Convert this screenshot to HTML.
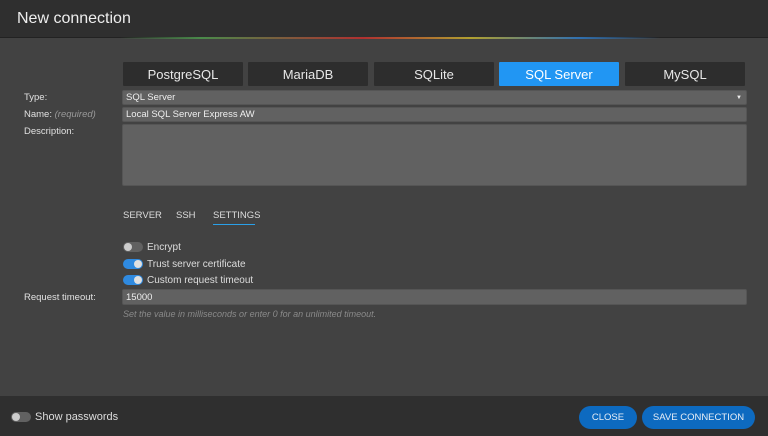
<!DOCTYPE html>
<html><head><style>
*{box-sizing:border-box;margin:0;padding:0}
body{width:768px;height:436px;background:#424242;font-family:"Liberation Sans",sans-serif;color:#ddd;position:relative;overflow:hidden;font-size:10px}
.a{position:absolute}
.hdr{left:0;top:0;width:768px;height:38px;background:#2f2f2f;border-bottom:1px solid #222}
.hdr span{position:absolute;left:17px;top:10px;font-size:16px;color:#eee}
.grad{left:120px;top:37px;width:540px;height:2px;background:linear-gradient(90deg,rgba(0,0,0,0),#4a8a4a 15%,#b03030 45%,#b0a030 65%,#3070b0 85%,rgba(0,0,0,0))}
.tab{top:62px;height:24px;width:120px;background:#2d2d2d;color:#e8e8e8;font-size:13px;text-align:center;line-height:25px;border-radius:1px}
.inp{left:122px;width:625px;background:#616161;border:1px solid #555;color:#eee;font-size:9.5px;padding-left:3px;border-radius:2px}
.lbl{left:24px;font-size:9.5px;color:#e0e0e0}
.tg{width:20px;height:10px;border-radius:5px;background:#616161}
.tg i{position:absolute;top:1px;left:1px;width:8px;height:8px;border-radius:50%;background:#ccc}
.tg.on{background:#2f8ae0}.tg.on i{left:11px;background:#e0e0e0}
.foot{left:0;top:396px;width:768px;height:40px;background:#2f2f2f}
.btn{top:406px;height:23px;border-radius:12px;background:#0d6ac0;color:#e8eef6;font-size:9.5px;text-align:center;line-height:23px}
</style></head><body>
<div class="a hdr"><span>New connection</span></div>
<div class="a grad"></div>
<div class="a tab" style="left:123px">PostgreSQL</div>
<div class="a tab" style="left:248px">MariaDB</div>
<div class="a tab" style="left:374px">SQLite</div>
<div class="a tab" style="left:499px;background:#2196f3;color:#fff">SQL Server</div>
<div class="a tab" style="left:625px">MySQL</div>
<div class="a lbl" style="top:92px">Type:</div>
<div class="a inp" style="top:90px;height:15px;line-height:14px">SQL Server<span style="position:absolute;right:4px;font-size:6px">▼</span></div>
<div class="a lbl" style="top:109px">Name: <i style="color:#999">(required)</i></div>
<div class="a inp" style="top:107px;height:15px;line-height:14px">Local SQL Server Express AW</div>
<div class="a lbl" style="top:126px">Description:</div>
<div class="a inp" style="top:124px;height:62px"></div>
<div class="a" style="left:123px;top:210px;font-size:9.5px">SERVER</div>
<div class="a" style="left:176px;top:210px;font-size:9.5px">SSH</div>
<div class="a" style="left:213px;top:210px;font-size:9.5px">SETTINGS</div>
<div class="a" style="left:213px;top:224px;width:42px;height:1px;background:#2aa0e8"></div>
<div class="a tg" style="left:123px;top:242px"><i></i></div><div class="a" style="left:147px;top:242px">Encrypt</div>
<div class="a tg on" style="left:123px;top:259px"><i></i></div><div class="a" style="left:147px;top:259px">Trust server certificate</div>
<div class="a tg on" style="left:123px;top:275px"><i></i></div><div class="a" style="left:147px;top:275px">Custom request timeout</div>
<div class="a lbl" style="top:292px">Request timeout:</div>
<div class="a inp" style="top:289px;height:16px;line-height:15px">15000</div>
<div class="a" style="left:123px;top:309px;font-size:9px;font-style:italic;color:#8a8a8a">Set the value in milliseconds or enter 0 for an unlimited timeout.</div>
<div class="a foot"></div>
<div class="a tg" style="left:11px;top:412px"><i></i></div><div class="a" style="left:35px;top:411px;font-size:11px">Show passwords</div>
<div class="a btn" style="left:579px;width:58px">CLOSE</div>
<div class="a btn" style="left:642px;width:113px">SAVE CONNECTION</div>
</body></html>
